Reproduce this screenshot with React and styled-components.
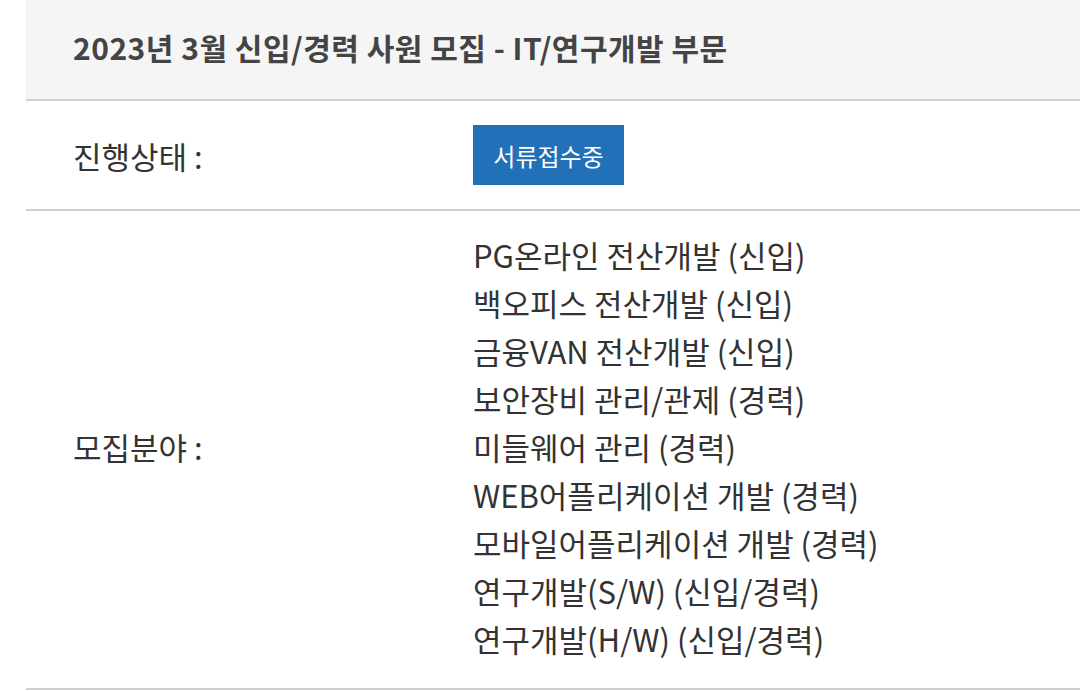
import styled, { createGlobalStyle } from "styled-components";

const GlobalStyle = createGlobalStyle`
  html, body {
    margin: 0;
    padding: 0;
    background: #fff;
  }
  body {
    font-family: "Noto Sans CJK KR", "Noto Sans", sans-serif;
    color: #333;
  }
`;

const fields = [
  "PG온라인 전산개발 (신입)",
  "백오피스 전산개발 (신입)",
  "금융VAN 전산개발 (신입)",
  "보안장비 관리/관제 (경력)",
  "미들웨어 관리 (경력)",
  "WEB어플리케이션 개발 (경력)",
  "모바일어플리케이션 개발 (경력)",
  "연구개발(S/W) (신입/경력)",
  "연구개발(H/W) (신입/경력)",
];

export default function App() {
  return (
    <>
      <GlobalStyle />
      <Page>
        <Title>2023년 3월 신입/경력 사원 모집 - IT/연구개발 부문</Title>
        <Row $height={110}>
          <Label>진행상태 :</Label>
          <Value>
            <StatusBadge>서류접수중</StatusBadge>
          </Value>
        </Row>
        <Row $height={479} $shift={6}>
          <Label>모집분야 :</Label>
          <Value>
            <FieldList>
              {fields.map((f) => (
                <li key={f}>{f}</li>
              ))}
            </FieldList>
          </Value>
        </Row>
      </Page>
    </>
  );
}

const Page = styled.div`
  margin-left: 26px;
  width: 1054px;
`;

const Title = styled.h1`
  margin: 0;
  height: 101px;
  box-sizing: border-box;
  padding: 0 0 6px 47px;
  display: flex;
  align-items: center;
  background: #f5f5f5;
  border-bottom: 2px solid #cfcfcf;
  font-size: 30px;
  font-weight: 700;
  color: #444;
  letter-spacing: 0.5px;
`;

const Row = styled.div`
  display: flex;
  align-items: center;
  box-sizing: border-box;
  height: ${(p) => p.$height}px;
  padding-bottom: ${(p) => p.$shift || 0}px;
  border-bottom: 2px solid #cfcfcf;
`;

const Label = styled.div`
  width: 400px;
  padding-left: 47px;
  font-size: 31px;
  color: #333;
`;

const Value = styled.div`
  flex: 1;
`;

const StatusBadge = styled.span`
  display: inline-flex;
  align-items: center;
  justify-content: center;
  width: 151px;
  height: 60px;
  background: #2170b8;
  color: #fff;
  font-size: 24px;
`;

const FieldList = styled.ul`
  margin: 0;
  padding: 0;
  list-style: none;
  font-size: 31px;
  line-height: 48px;
  color: #333;
`;
